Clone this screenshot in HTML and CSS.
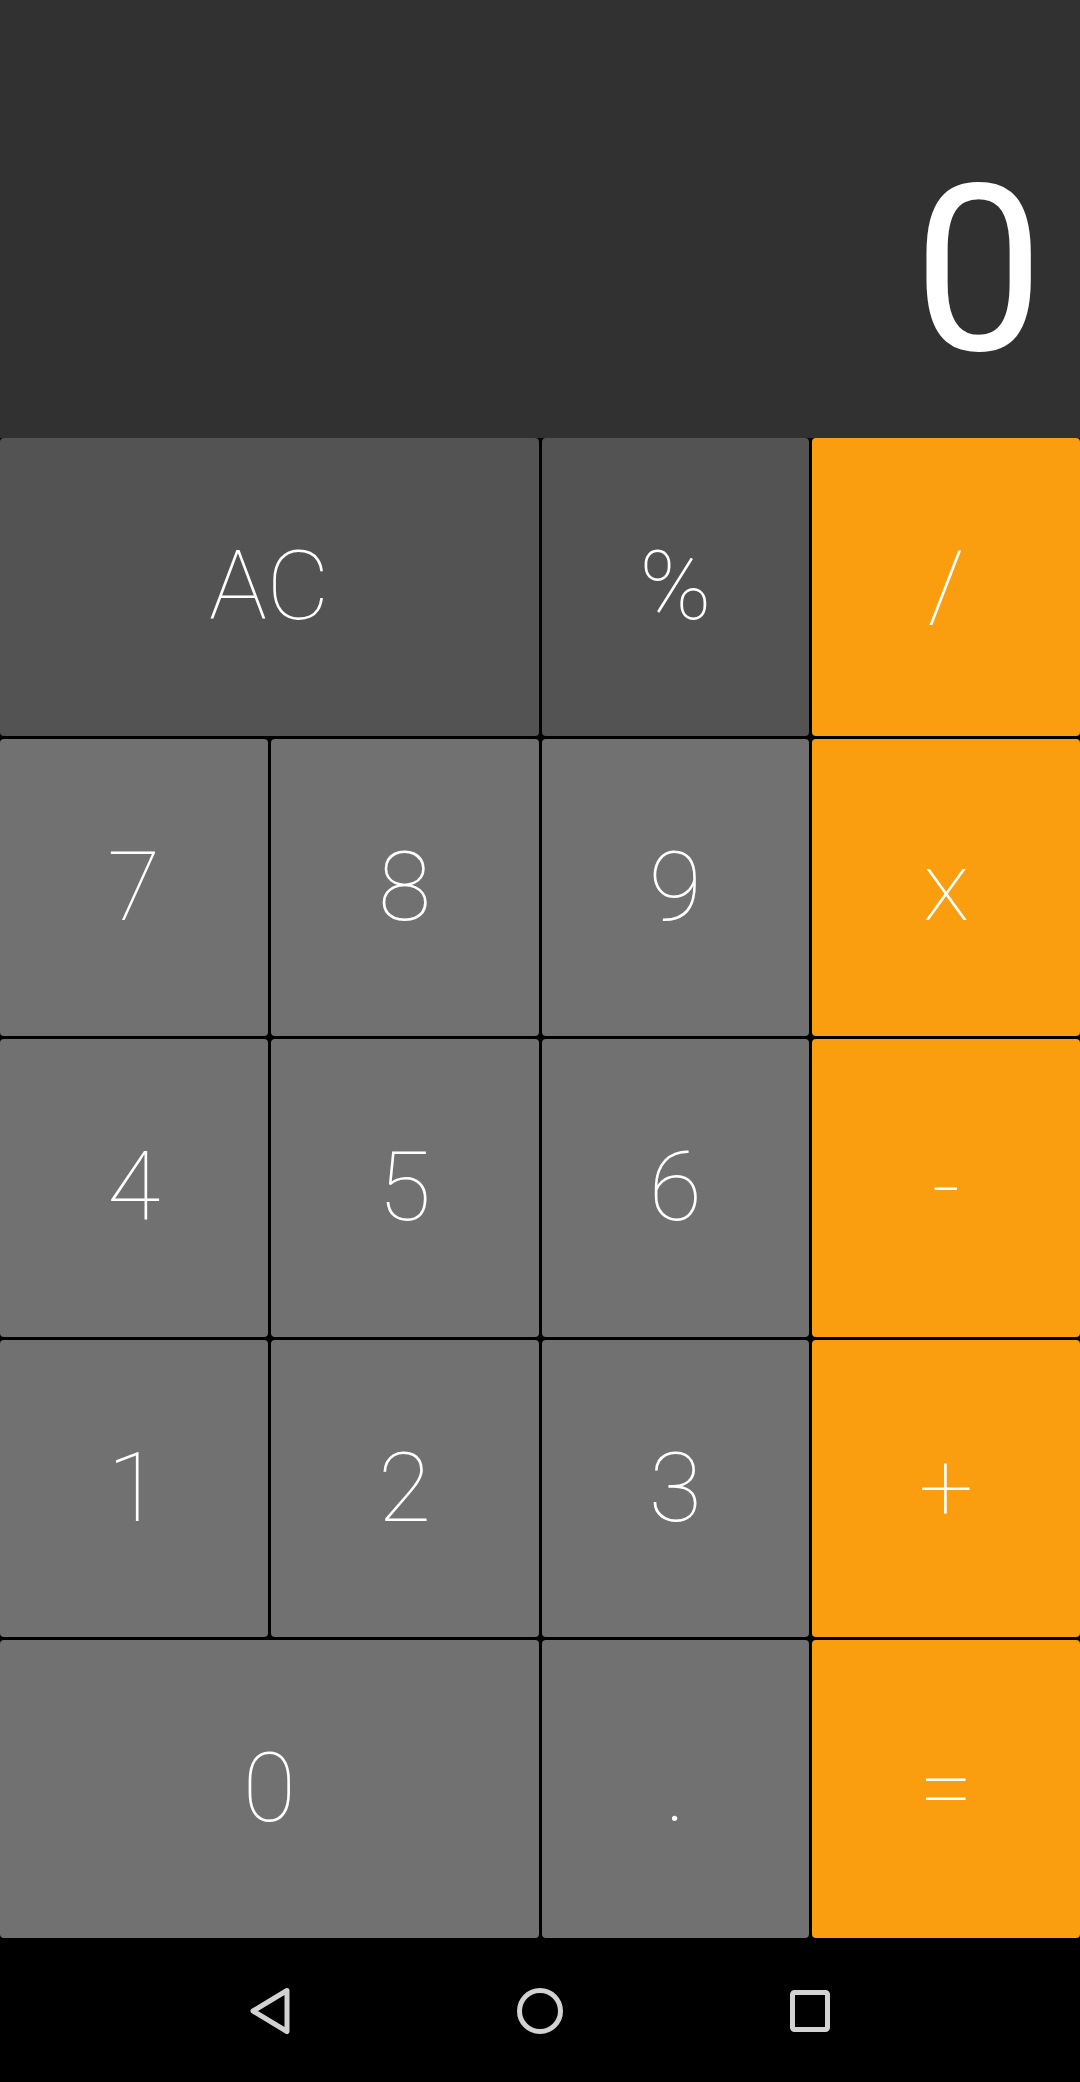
FILE: index.html
```html
<!DOCTYPE html>
<html lang="en">
<head>
<meta charset="utf-8">
<title>Calculator</title>
<link rel="stylesheet" href="styles.css">
</head>
<body>
<div class="app">
  <div class="display"><span class="value">0</span></div>
  <div class="keypad">
    <div class="key fn wide">AC</div>
    <div class="key fn">%</div>
    <div class="key op">/</div>
    <div class="key num">7</div>
    <div class="key num">8</div>
    <div class="key num">9</div>
    <div class="key op">x</div>
    <div class="key num">4</div>
    <div class="key num">5</div>
    <div class="key num">6</div>
    <div class="key op">-</div>
    <div class="key num">1</div>
    <div class="key num">2</div>
    <div class="key num">3</div>
    <div class="key op">+</div>
    <div class="key num wide">0</div>
    <div class="key num">.</div>
    <div class="key op">=</div>
  </div>
  <div class="navbar">
    <svg class="nav-icon" viewBox="0 0 60 60" width="60" height="60"><path d="M47 9.5 L13 30 L47 50.5 Z" /></svg>
    <svg class="nav-icon" viewBox="0 0 60 60" width="60" height="60"><circle cx="30" cy="30" r="20.5" /></svg>
    <svg class="nav-icon" viewBox="0 0 60 60" width="60" height="60"><rect x="12.5" y="11.5" width="35" height="37" rx="2" /></svg>
  </div>
</div>
</body>
</html>
```
FILE: styles.css
```css
html, body {
  margin: 0;
  padding: 0;
  background: #000;
}
.app {
  width: 1080px;
  height: 2082px;
  display: flex;
  flex-direction: column;
  font-family: Roboto, "Liberation Sans", sans-serif;
  color: #fff;
}
.display {
  height: 438px;
  box-sizing: border-box;
  background: #313131;
  padding: 155px 36px 0 0;
  text-align: right;
}
.value {
  font-size: 232px;
  line-height: 232px;
  font-weight: 400;
}
.keypad {
  display: grid;
  grid-template-columns: repeat(4, 1fr);
  grid-auto-rows: 297.5px;
  gap: 3px;
  padding-bottom: 2px;
  background: #000;
}
.key {
  display: flex;
  align-items: center;
  justify-content: center;
  border-radius: 4px;
  font-size: 97px;
  line-height: 1;
  font-weight: 100;
}
.wide {
  grid-column: span 2;
}
.fn {
  background: #535353;
}
.num {
  background: #717171;
}
.op {
  background: #fa9e10;
}
.navbar {
  flex: 1;
  display: flex;
  align-items: center;
  justify-content: center;
  gap: 210px;
  background: #000;
}
.nav-icon {
  fill: none;
  stroke: #d2d2d2;
  stroke-width: 5;
  stroke-linejoin: round;
}
```
